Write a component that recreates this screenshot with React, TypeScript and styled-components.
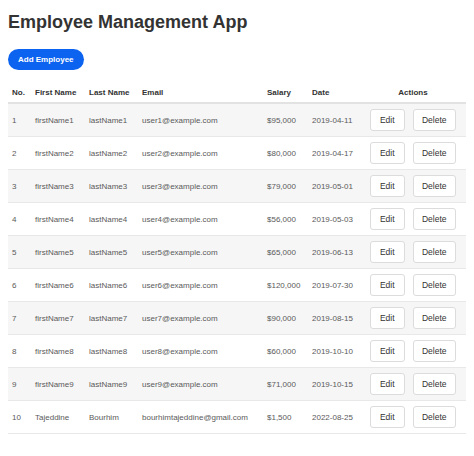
import React from 'react';
import styled, { createGlobalStyle } from 'styled-components';

const GlobalStyle = createGlobalStyle`
    body {
        margin: 0;
        background: #fff;
        font-family: 'Liberation Sans', Arial, sans-serif;
    }
`;

const Page = styled.div`
    padding: 0 8px;
`;

const Title = styled.h1`
    margin: 12px 0 16px;
    font-size: 18px;
    font-weight: bold;
    color: #333;
    line-height: 21px;
`;

const AddButton = styled.button`
    display: block;
    height: 21px;
    padding: 0 10px;
    margin: 0 0 12px;
    border: none;
    border-radius: 11px;
    background: #0b63f0;
    color: #fff;
    font-family: inherit;
    font-size: 8px;
    font-weight: bold;
`;

const Table = styled.table`
    width: 458px;
    table-layout: fixed;
    border-collapse: collapse;
    font-size: 8px;
`;

const Th = styled.th<{ center?: boolean }>`
    height: 20px;
    padding: ${({ center }) => (center ? '0 6px 0 0' : '0 4px')};
    text-align: ${({ center }) => (center ? 'center' : 'left')};
    font-weight: bold;
    color: #333;
    border-bottom: 2px solid #e2e2e2;
`;

const Row = styled.tr<{ odd: boolean }>`
    background: ${({ odd }) => (odd ? '#f6f6f6' : '#fff')};
`;

const Td = styled.td`
    height: 32px;
    padding: 0 4px;
    color: #5a5a5a;
    border-bottom: 1px solid #e8e8e8;
    white-space: nowrap;
`;

const Actions = styled.div`
    display: flex;
    justify-content: center;
    gap: 8px;
    padding-right: 6px;
`;

const ActionButton = styled.button<{ w: number }>`
    width: ${({ w }) => w}px;
    height: 22px;
    padding: 0;
    border: 1px solid #dcdcdc;
    border-radius: 3px;
    background: #fff;
    color: #333;
    font-family: inherit;
    font-size: 8.5px;
`;

const employees = [
    ['firstName1', 'lastName1', 'user1@example.com', '$95,000', '2019-04-11'],
    ['firstName2', 'lastName2', 'user2@example.com', '$80,000', '2019-04-17'],
    ['firstName3', 'lastName3', 'user3@example.com', '$79,000', '2019-05-01'],
    ['firstName4', 'lastName4', 'user4@example.com', '$56,000', '2019-05-03'],
    ['firstName5', 'lastName5', 'user5@example.com', '$65,000', '2019-06-13'],
    ['firstName6', 'lastName6', 'user6@example.com', '$120,000', '2019-07-30'],
    ['firstName7', 'lastName7', 'user7@example.com', '$90,000', '2019-08-15'],
    ['firstName8', 'lastName8', 'user8@example.com', '$60,000', '2019-10-10'],
    ['firstName9', 'lastName9', 'user9@example.com', '$71,000', '2019-10-15'],
    ['Tajeddine', 'Bourhim', 'bourhimtajeddine@gmail.com', '$1,500', '2022-08-25'],
];

export default function App() {
    return (
        <Page>
            <GlobalStyle />
            <Title>Employee Management App</Title>
            <AddButton>Add Employee</AddButton>
            <Table>
                <colgroup>
                    <col style={{ width: 23 }} />
                    <col style={{ width: 54 }} />
                    <col style={{ width: 53 }} />
                    <col style={{ width: 125 }} />
                    <col style={{ width: 45 }} />
                    <col style={{ width: 58 }} />
                    <col />
                </colgroup>
                <thead>
                    <tr>
                        <Th>No.</Th>
                        <Th>First Name</Th>
                        <Th>Last Name</Th>
                        <Th>Email</Th>
                        <Th>Salary</Th>
                        <Th>Date</Th>
                        <Th center>Actions</Th>
                    </tr>
                </thead>
                <tbody>
                    {employees.map((e, i) => (
                        <Row key={i} odd={i % 2 === 0}>
                            <Td>{i + 1}</Td>
                            {e.map((v, j) => (
                                <Td key={j}>{v}</Td>
                            ))}
                            <Td>
                                <Actions>
                                    <ActionButton w={35}>Edit</ActionButton>
                                    <ActionButton w={44}>Delete</ActionButton>
                                </Actions>
                            </Td>
                        </Row>
                    ))}
                </tbody>
            </Table>
        </Page>
    );
}
